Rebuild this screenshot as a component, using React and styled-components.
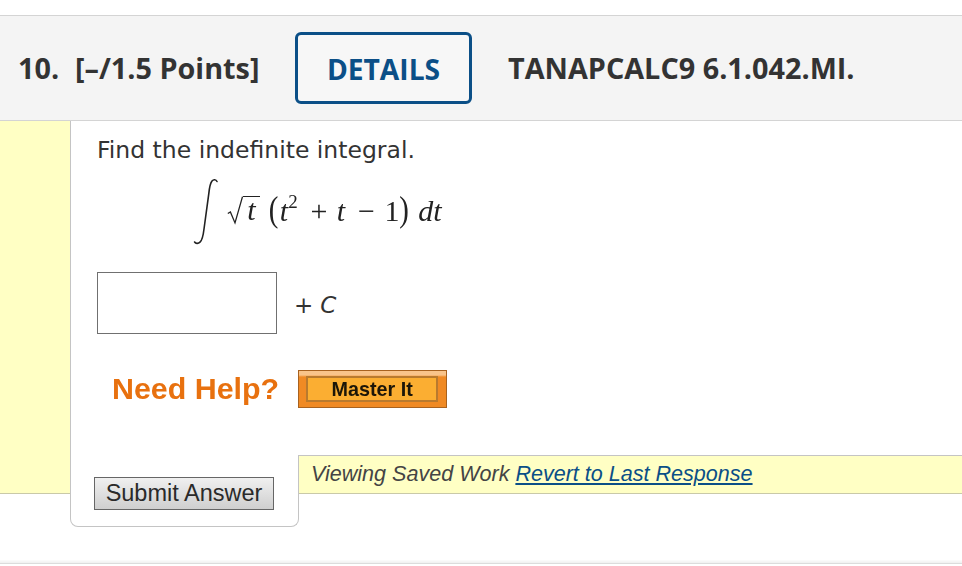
import React from "react";
import styled, { createGlobalStyle } from "styled-components";

const Global = createGlobalStyle`
  html, body { margin: 0; padding: 0; background: #fff; }
  body { width: 962px; height: 566px; overflow: hidden; font-family: "Liberation Sans", Arial, sans-serif; }
`;
const Page = styled.div`
  width: 962px; height: 566px; padding-top: 15px; box-sizing: border-box; display: flex; flex-direction: column;
  position: relative;
`;
const Header = styled.header`
  height: 106px; box-sizing: border-box; background: #f4f4f4;
  border-top: 1px solid #d4d4d4; border-bottom: 1px solid #d4d4d4;
  display: flex; align-items: center; padding-left: 18px;
  font-family: "Open Sans", sans-serif; font-weight: 700; color: #333; font-size: 28.8px;
`;
const HeaderText = styled.span` width: ${p => p.$w ? p.$w + "px" : "auto"}; margin-top: -1px; `;
const DetailsButton = styled.div`
  width: 177px; height: 72px; box-sizing: border-box; border: 3px solid #0b4f87; border-radius: 6px;
  color: #0b4f87; display: flex; align-items: center; justify-content: center; margin-right: 36px;
  background: #f7f7f7; font-size: 28.2px; padding-top: 2px;
`;
const Body = styled.div` display: flex; align-items: flex-start; `;
const YellowStrip = styled.div`
  width: 70px; height: 373px; box-sizing: border-box; background: #ffffc4; border-bottom: 1px solid #c9c9a8;
`;
const Content = styled.div` flex: 1; display: flex; flex-direction: column; `;
const Question = styled.div`
  height: 334px; box-sizing: border-box; border-left: 1px solid #c4c4c4; padding: 14px 0 0 26px; color: #333;
`;
const Prompt = styled.div` font-family: "DejaVu Sans", sans-serif; font-size: 23.5px; line-height: 30px; `;
const Formula = styled.div`
  display: flex; align-items: center; height: 72px; margin: 10px 0 0 93px;
  font-family: "Liberation Serif", serif; font-size: 30px; color: #222; white-space: nowrap;
  filter: blur(0.4px);
`;
const Cell = styled.span`
  flex: none; width: ${p => p.$w}px; margin-left: ${p => p.$ml || 0}px; display: flex; justify-content: center;
  font-style: ${p => (p.$it ? "italic" : "normal")};
`;
const Two = styled(Cell)` font-size: 19px; position: relative; top: -9px; `;
const Paren = styled(Cell)` font-size: 36px; font-weight: 400; transform: scaleX(0.8); position: relative; top: -2px; `;
const Radicand = styled(Cell)` border-top: 1.3px solid #222; line-height: 26px; height: 28px; font-style: italic; margin-top: -1px; `;
const AnswerRow = styled.div` display: flex; align-items: center; margin-top: 25px; gap: 17px; `;
const AnswerBox = styled.div` width: 180px; height: 62px; box-sizing: border-box; border: 1px solid #707070; background: #fff; `;
const PlusC = styled.span` font-family: "DejaVu Sans", sans-serif; font-size: 23px; color: #333; margin-top: 4px; i { margin-left: 7px; } `;
const HelpRow = styled.div` display: flex; align-items: center; margin: 36px 0 0 15px; gap: 19px; `;
const NeedHelp = styled.span`
  font-family: "Liberation Sans", sans-serif; font-weight: 700; font-size: 30.4px; color: #e8710f; filter: blur(0.5px);
  margin-top: -2px;
`;
const MasterIt = styled.div`
  width: 149px; height: 38px; box-sizing: border-box; border: 1px solid #a8621f; padding: 5px 8px 5px 7px;
  background: linear-gradient(#f9c48a 0, #f9c48a 4px, #f08a24 6px, #f08a24 100%);
`;
const MasterInner = styled.div`
  height: 100%; box-sizing: border-box; border: 2px solid #b97a2e; background: #fbae32;
  display: flex; align-items: center; justify-content: center; color: #1c1608;
  font-family: "Liberation Sans", sans-serif; font-weight: 700; font-size: 19.8px; filter: blur(0.45px);
`;
const BottomRow = styled.div` display: flex; align-items: flex-start; `;
const SubmitPanel = styled.div`
  width: 229px; height: 72px; box-sizing: border-box; background: #fff; border: 1px solid #c4c4c4; border-top: 0;
  border-radius: 0 0 8px 8px; padding: 22px 0 0 23px;
`;
const SubmitButton = styled.div`
  width: 180px; height: 33px; box-sizing: border-box; border: 1px solid #666;
  background: linear-gradient(#f0f0f0, #cfcfcf); display: flex; align-items: center; justify-content: center;
  font-size: 23.5px; color: #2a2a2a;
`;
const SavedBanner = styled.div`
  flex: 1; height: 39px; box-sizing: border-box; background: #ffffc4;
  border-top: 1px solid #c4c4c4; border-bottom: 1px solid #c9c9a8;
  padding: 2px 0 0 12px; font-size: 21.56px; font-style: italic; color: #444; line-height: 32px;
`;
const Revert = styled.a` color: #0b4f87; text-decoration: underline; `;
const FooterLine = styled.div`
  position: absolute; left: 0; right: 0; bottom: 2px; height: 4px;
  background: linear-gradient(#fcfcfc, #f0f0f0); border-bottom: 1px solid #dcdcdc; box-sizing: border-box;
`;

const Integral = () => (
  <svg width="36" height="70" viewBox="0 0 36 70" style={{ flex: "none" }}>
    <path d="M27 5.5c-1-2-3.4-2.4-5-.4-2 2.4-2.6 7-3.2 12.5L14 53c-.7 6-1.6 11-4 13.2-1.8 1.7-4.4 1.4-5.4-.2" fill="none" stroke="#222" strokeWidth="1.6" strokeLinecap="round" />
  </svg>
);
const Radical = () => (
  <svg width="16" height="30" viewBox="0 0 16 30" style={{ flex: "none", marginLeft: 1, marginTop: -1 }}>
    <path d="M.8 17.5l2.6-1.6 4.6 11L15.5 .7" fill="none" stroke="#222" strokeWidth="1.3" />
  </svg>
);

export default function App() {
  return (
    <Page>
      <Global />
      <Header>
        <HeaderText $w={57}>10.</HeaderText>
        <HeaderText $w={220}>[–/1.5 Points]</HeaderText>
        <DetailsButton>DETAILS</DetailsButton>
        <HeaderText>TANAPCALC9 6.1.042.MI.</HeaderText>
      </Header>
      <Body>
        <YellowStrip />
        <Content>
          <Question>
            <Prompt>Find the indefinite integral.</Prompt>
            <Formula>
              <Integral />
              <Radical />
              <Radicand $w={17}>t</Radicand>
              <Paren $w={9} $ml={9}>(</Paren>
              <Cell $w={8} $ml={2} $it>t</Cell>
              <Two $w={10}>2</Two>
              <Cell $w={22} $ml={10}>+</Cell>
              <Cell $w={8} $ml={7} $it>t</Cell>
              <Cell $w={21} $ml={11}>−</Cell>
              <Cell $w={10} $ml={10}>1</Cell>
              <Paren $w={8} $ml={3}>)</Paren>
              <Cell $w={24} $ml={10} $it>dt</Cell>
            </Formula>
            <AnswerRow>
              <AnswerBox />
              <PlusC>+<i>C</i></PlusC>
            </AnswerRow>
            <HelpRow>
              <NeedHelp>Need Help?</NeedHelp>
              <MasterIt><MasterInner>Master It</MasterInner></MasterIt>
            </HelpRow>
          </Question>
          <BottomRow>
            <SubmitPanel>
              <SubmitButton>Submit Answer</SubmitButton>
            </SubmitPanel>
            <SavedBanner>Viewing Saved Work <Revert>Revert to Last Response</Revert></SavedBanner>
          </BottomRow>
        </Content>
      </Body>
      <FooterLine />
    </Page>
  );
}
